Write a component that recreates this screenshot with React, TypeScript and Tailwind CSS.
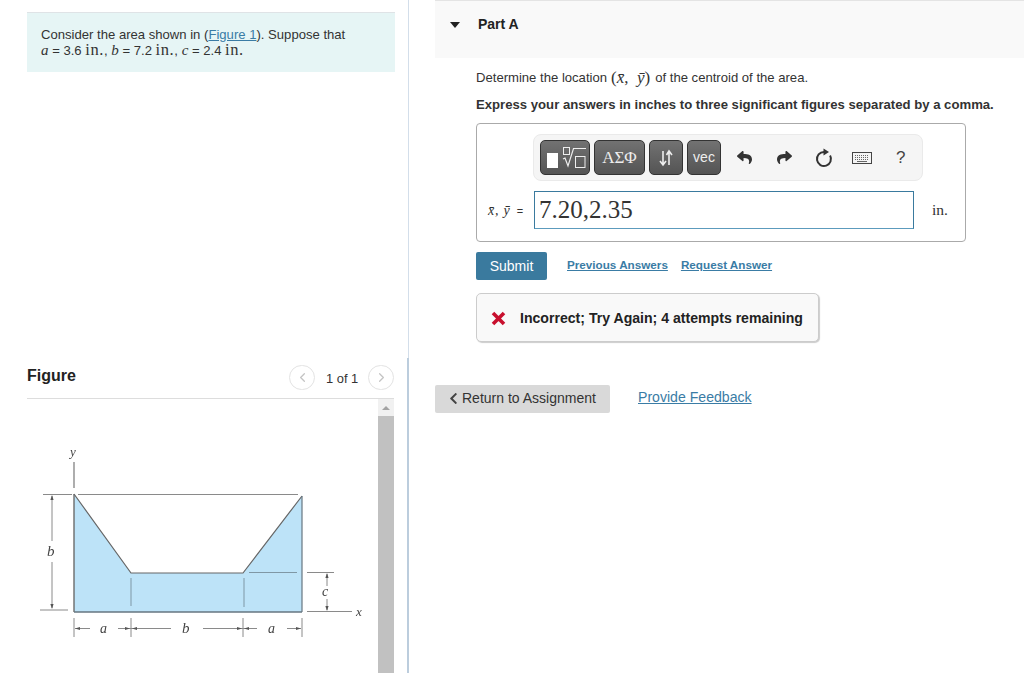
import { FaReply, FaShare, FaChevronLeft } from "react-icons/fa"
import { ChevronLeft, ChevronRight } from "lucide-react"

const sans = "font-['Liberation_Sans',Arial,sans-serif]"
const serif = "font-['Liberation_Serif','Times_New_Roman',serif]"

function Var({ children }: { children: string }) {
  return <span className={`${serif} text-[15px] italic`}>{children}</span>
}

function Unit() {
  return <span className={`${serif} text-[16.5px] tracking-[0.6px]`}>in.</span>
}

function Arrow({ x, y, dir }: { x: number; y: number; dir: "l" | "r" | "u" | "d" }) {
  const pts = {
    l: `${x},${y} ${x + 5},${y - 1.6} ${x + 5},${y + 1.6}`,
    r: `${x},${y} ${x - 5},${y - 1.6} ${x - 5},${y + 1.6}`,
    u: `${x},${y} ${x - 1.6},${y + 5} ${x + 1.6},${y + 5}`,
    d: `${x},${y} ${x - 1.6},${y - 5} ${x + 1.6},${y - 5}`,
  }[dir]
  return <polygon points={pts} fill="#555" />
}

function Diagram() {
  const thin = { stroke: "#8a8a8a", strokeWidth: 1, fill: "none" }
  const label = "font-['Liberation_Serif',serif] italic"
  return (
    <svg width="351" height="274" viewBox="27 399 351 274" className="block shrink-0 blur-[0.4px]">
      <polygon points="74,494 131,573 243,573 302,496 302,612 74,612" fill="#bde3f8" />
      <polyline points="74,494 131,573 243,573 302,496" fill="none" stroke="#666" strokeWidth="1.2" />
      <line x1="74" y1="494" x2="74" y2="612" stroke="#6b6b6b" strokeWidth="1.4" />
      <line x1="74" y1="612" x2="302" y2="612" stroke="#667680" strokeWidth="1.4" />
      <line x1="302" y1="496" x2="302" y2="612" stroke="#667680" strokeWidth="1.2" />
      <line x1="131" y1="578" x2="131" y2="606" stroke="#7f97a5" />
      <line x1="244" y1="578" x2="244" y2="607" stroke="#7f97a5" />
      <line x1="249" y1="572.5" x2="297" y2="572.5" stroke="#7f97a5" />

      <line x1="74" y1="462" x2="74" y2="488" stroke="#777" strokeWidth="1.2" />
      <line x1="78" y1="494.5" x2="298" y2="494.5" {...thin} />
      <line x1="43" y1="494.5" x2="72" y2="494.5" {...thin} />
      <line x1="40" y1="610" x2="68" y2="610" {...thin} />
      <line x1="52" y1="496" x2="52" y2="541" {...thin} />
      <line x1="52" y1="562" x2="52" y2="608" {...thin} />
      <Arrow x={52} y={495} dir="u" />
      <Arrow x={52} y={609} dir="d" />

      <line x1="307" y1="572.5" x2="334" y2="572.5" {...thin} />
      <line x1="307" y1="611.5" x2="352" y2="611.5" {...thin} />
      <line x1="327" y1="574" x2="327" y2="586" {...thin} />
      <line x1="327" y1="599" x2="327" y2="610" {...thin} />
      <Arrow x={327} y={573} dir="u" />
      <Arrow x={327} y={611} dir="d" />

      <line x1="74" y1="618" x2="74" y2="637" {...thin} />
      <line x1="131" y1="618" x2="131" y2="637" {...thin} />
      <line x1="243" y1="618" x2="243" y2="637" {...thin} />
      <line x1="302" y1="618" x2="302" y2="637" {...thin} />
      <line x1="75" y1="628.5" x2="90" y2="628.5" {...thin} />
      <line x1="118" y1="628.5" x2="171" y2="628.5" {...thin} />
      <line x1="203" y1="628.5" x2="257" y2="628.5" {...thin} />
      <line x1="287" y1="628.5" x2="301" y2="628.5" {...thin} />
      <Arrow x={75} y={628.5} dir="l" />
      <Arrow x={130} y={628.5} dir="r" />
      <Arrow x={132} y={628.5} dir="l" />
      <Arrow x={242} y={628.5} dir="r" />
      <Arrow x={244} y={628.5} dir="l" />
      <Arrow x={301} y={628.5} dir="r" />

      <g fill="#444" fontSize="14" className={label}>
        <text x="70" y="456" fontSize="13">y</text>
        <text x="47" y="556" fontSize="15">b</text>
        <text x="100" y="633">a</text>
        <text x="182" y="633" fontSize="15">b</text>
        <text x="268" y="633">a</text>
        <text x="322" y="596">c</text>
        <text x="356" y="616" fontSize="13">x</text>
      </g>
    </svg>
  )
}

function ToolButton({ className, children }: { className: string; children: React.ReactNode }) {
  return (
    <div
      className={`flex h-[35px] items-center justify-center rounded-[5px] border border-[#333] bg-gradient-to-b from-[#727272] to-[#545454] text-[#eee] ${className}`}
    >
      {children}
    </div>
  )
}

export default function App() {
  return (
    <div className={`flex h-[673px] w-[1024px] overflow-hidden bg-white text-[#333] ${sans}`}>
      {/* left column */}
      <div className="flex w-[409px] shrink-0 flex-col">
        <div className="h-[358px] border-r border-[#d3deea] pl-[27px] pr-[13px] pt-[12px]">
          <div className="h-[60px] border-t border-[#dfe3e6] bg-[#e6f5f5] pl-[14px] pt-[14px] text-[13.1px] leading-[15px]">
            <p>
              Consider the area shown in (<span className="text-[#3a7ca5] underline">Figure 1</span>). Suppose that
            </p>
            <p>
              <Var>a</Var> = 3.6 <Unit />, <Var>b</Var> = 7.2 <Unit />, <Var>c</Var> = 2.4 <Unit />
            </p>
          </div>
        </div>
        <div className="min-h-0 flex-1 border-r-2 border-[#bccddd] pl-[27px] pr-[13px] pt-[7px]">
          <div className="flex h-[34px] items-start justify-between border-b border-[#ddd]">
            <span className="mt-[2px] text-[16px] font-bold leading-[17px] text-[#222]">Figure</span>
            <div className="flex items-start">
              <div className="flex h-[25px] w-[26px] items-center justify-center rounded-full border border-[#e3e3e3]">
                <ChevronLeft size={15} color="#c4c4c4" />
              </div>
              <span className="mx-[11px] mt-[6px] w-[31px] whitespace-nowrap text-[12.9px] leading-4">1 of 1</span>
              <div className="flex h-[25px] w-[26px] items-center justify-center rounded-full border border-[#e3e3e3]">
                <ChevronRight size={15} color="#c4c4c4" />
              </div>
            </div>
          </div>
          <div className="flex">
            <Diagram />
            <div className="flex w-[16px] flex-col bg-[#f1f1f1]">
              <div className="flex h-[17px] items-center justify-center">
                <div className="h-0 w-0 border-x-[4px] border-b-[4px] border-x-transparent border-b-[#a3a3a3]" />
              </div>
              <div className="h-[260px] bg-[#c1c1c1]" />
            </div>
          </div>
        </div>
      </div>

      {/* right column */}
      <div className="min-w-0 flex-1 pl-[26px]">
        <div className="flex h-[58px] items-start border-t border-[#e4e4e4] bg-[#f9f9f9]">
          <div className="ml-[15px] mt-[21px] h-0 w-0 border-x-[5px] border-t-[6px] border-x-transparent border-t-[#222]" />
          <span className="ml-[18px] mt-[15px] text-[14px] font-bold leading-4 text-[#222]">Part A</span>
        </div>

        <div className="pl-[41px]">
          <p className="mt-[9px] flex h-[22px] items-center whitespace-nowrap text-[13.1px] text-[#333]">
            Determine the location
            <span className={`${serif} ml-[4px] mr-[5px] text-[17px]`}>
              (<i>x̄</i>,&nbsp;&nbsp;<i>ȳ</i>)
            </span>
            of the centroid of the area.
          </p>
          <p className="mt-[7px] whitespace-nowrap text-[13.15px] font-bold leading-[17px] text-[#333]">
            Express your answers in inches to three significant figures separated by a comma.
          </p>

          <div className="mt-[10px] h-[119px] w-[490px] rounded-[4px] border border-[#aaa] pl-[7px] pt-[10px]">
            <div className="ml-[49px] flex h-[47px] w-[390px] items-center gap-[4px] rounded-[8px] border border-[#eaeaea] bg-[#f5f5f5] pl-[6px]">
              <ToolButton className="w-[50px]">
                <svg width="48" height="33" viewBox="0 0 48 33" fill="none" stroke="#eee" strokeWidth="1">
                  <rect x="6" y="12" width="11" height="15" fill="#fff" stroke="none" />
                  <rect x="22.5" y="6.5" width="6" height="7" />
                  <path d="M22 18 L24 17 L27 25 L32.5 7.5 H45" strokeWidth="1.2" />
                  <rect x="34.5" y="15.5" width="9.5" height="11" />
                </svg>
              </ToolButton>
              <ToolButton className={`w-[51px] ${serif} text-[17px]`}>AΣΦ</ToolButton>
              <ToolButton className="w-[34px]">
                <svg width="16" height="18" viewBox="0 0 16 18" fill="none" stroke="#eee" strokeWidth="1.6">
                  <path d="M5 2 V15 M2 12 L5 16 L8 12" />
                  <path d="M11 16 V3 M8.5 6 L11 2 L14 6" />
                </svg>
              </ToolButton>
              <ToolButton className="w-[34px] text-[14px]">vec</ToolButton>
              <div className="ml-[11px] flex w-[16px] justify-center">
                <FaReply size={15} color="#333" />
              </div>
              <div className="ml-[20px] flex w-[16px] justify-center">
                <FaShare size={15} color="#333" />
              </div>
              <svg className="ml-[18px]" width="20" height="20" viewBox="0 0 20 20" fill="none" stroke="#333" strokeWidth="2">
                <path d="M10 4 A7 7 0 1 0 16.1 7.6" />
                <polygon points="9.5,0.5 15,4 9.5,7.5" fill="#333" stroke="none" />
              </svg>
              <svg className="ml-[14px]" width="20" height="12" viewBox="0 0 20 12" fill="#f4f4f4" stroke="#444">
                <rect x="0.5" y="0.5" width="19" height="11" />
                <path d="M3 3.5 H17 M3 5.5 H17 M3 7.5 H17" stroke="#666" strokeDasharray="1 1" />
                <path d="M5 9.5 H15" stroke="#666" />
              </svg>
              <span className="ml-[20px] text-[17px] text-[#444]">?</span>
            </div>

            <div className="mt-[10px] flex items-center">
              <span className="w-[50px] shrink-0 pl-[4px] text-[11px] whitespace-nowrap">
                <span className={`${serif} mr-[3px] italic text-[14px] tracking-[0.8px]`}>x̄, ȳ</span> =
              </span>
              <div
                className={`flex h-[38px] w-[380px] items-center border border-[#3a7a9e] border-b-[#5c9bbd] pl-[4px] text-[25px] text-[#333] ${serif}`}
              >
                7.20,2.35
              </div>
              <span className={`ml-[18px] text-[15.5px] ${serif}`}>in.</span>
            </div>
          </div>

          <div className="mt-[10px] flex items-center">
            <div className="flex h-[28px] w-[71px] items-center justify-center rounded-[2px] bg-[#3a7a9e] text-[14px] text-white">
              Submit
            </div>
            <span className="mb-[2px] ml-[20px] text-[11.7px] font-bold text-[#3a7ca5] underline">Previous Answers</span>
            <span className="mb-[2px] ml-[13px] text-[11.7px] font-bold text-[#3a7ca5] underline">Request Answer</span>
          </div>

          <div className="mt-[13px] flex h-[49px] w-[343px] items-center rounded-[5px] border border-[#ccc] bg-[#f9f9f9] pl-[14px] pt-[2px] shadow-[1px_1px_1px_#ccc]">
            <svg width="15" height="15" viewBox="0 0 15 15" stroke="#c8102e" strokeWidth="3.6">
              <path d="M2 2 L13 13 M13 2 L2 13" />
            </svg>
            <span className="ml-[14px] whitespace-nowrap text-[14.1px] font-bold text-[#222]">
              Incorrect; Try Again; 4 attempts remaining
            </span>
          </div>
        </div>

        <div className="mt-[43px] flex items-center">
          <div className="flex h-[28px] w-[175px] items-center rounded-[2px] bg-[#d9d9d9] pb-[1px] pl-[12px] text-[14px]">
            <FaChevronLeft size={13} color="#444" className="mr-[2px]" />
            Return to Assignment
          </div>
          <span className="mb-[2px] ml-[28px] text-[14.1px] text-[#3a7ca5] underline">Provide Feedback</span>
        </div>
      </div>
    </div>
  )
}
